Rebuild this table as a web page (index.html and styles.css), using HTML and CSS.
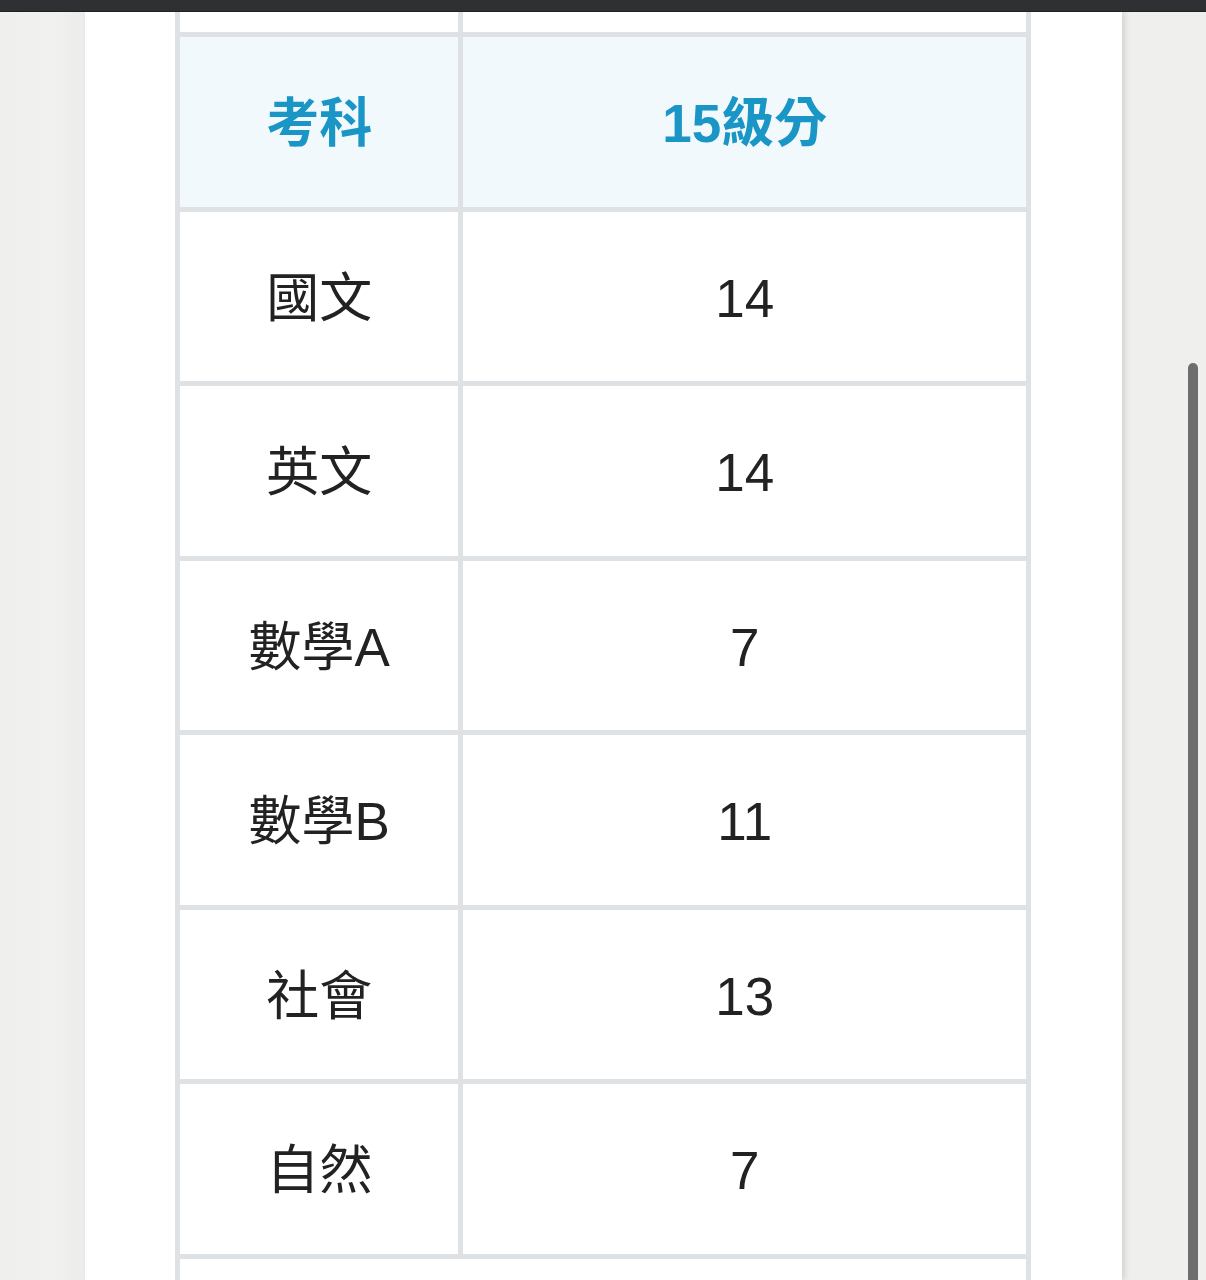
FILE: index.html
```html
<!DOCTYPE html>
<html lang="zh-Hant">
<head>
<meta charset="utf-8">
<title>15級分</title>
<link rel="stylesheet" href="styles.css">
</head>
<body>
<div class="topbar"></div>
<div class="viewport">
  <div class="side"></div>
  <main class="panel">
    <table class="scores">
      <colgroup><col class="c-subject"><col class="c-score"></colgroup>
      <tr class="cut"><td></td><td></td></tr>
      <tr class="head"><th>考科</th><th>15級分</th></tr>
      <tr><td>國文</td><td>14</td></tr>
      <tr><td>英文</td><td>14</td></tr>
      <tr><td>數學A</td><td>7</td></tr>
      <tr><td>數學B</td><td>11</td></tr>
      <tr><td>社會</td><td>13</td></tr>
      <tr><td>自然</td><td>7</td></tr>
      <tr class="tail"><td colspan="2"></td></tr>
    </table>
  </main>
  <div class="gutter"><div class="thumb"></div></div>
</div>
</body>
</html>
```
FILE: styles.css
```css
html, body {
  margin: 0;
  padding: 0;
  height: 1280px;
  overflow: hidden;
  background: #efefed;
  font-family: "Liberation Sans", "Noto Sans CJK TC", sans-serif;
}
.topbar {
  height: 11px;
  background: #2f3032;
  border-bottom: 1px solid #1f2022;
}
.viewport {
  display: grid;
  grid-template-columns: 85px 1037px 1fr;
  height: 1268px;
  overflow: hidden;
}
.side {
  background: linear-gradient(90deg, #efefed 0%, #f1f1ef 60%, #ececea 100%);
}
.panel {
  background: #ffffff;
  box-shadow: 3px 0 6px rgba(0, 0, 0, 0.12);
  position: relative;
  z-index: 1;
  overflow: hidden;
}
.scores {
  margin-left: 90px;
  width: 856px;
  table-layout: fixed;
  border-collapse: collapse;
}
.c-subject { width: 283px; }
.c-score { width: 567px; }
.scores td, .scores th {
  border: 5px solid #dfe2e5;
  height: 165.5px;
  padding: 4px 0 0;
  text-align: center;
  vertical-align: middle;
  font-size: 53px;
  line-height: 1;
  color: #222222;
  font-weight: 400;
}
.scores .cut td {
  height: 20px;
  padding: 0;
  border-top: 0;
}
.scores .head th {
  background: #f1f9fc;
  color: #1a96c6;
  font-weight: 700;
}
.scores .tail td {
  height: 60px;
}
.gutter {
  background: #efefed;
  padding: 351px 8px 0 66px;
}
.thumb {
  width: 10px;
  height: 100%;
  background: #6e6e6e;
  border-radius: 5px 5px 0 0;
}
```
